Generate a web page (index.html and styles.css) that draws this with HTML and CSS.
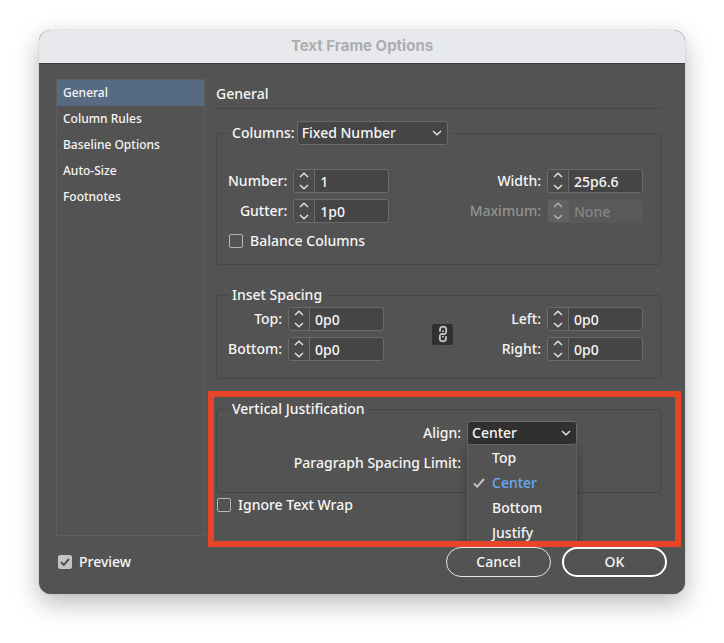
FILE: index.html
```html
<!DOCTYPE html>
<html lang="en">
<head>
    <meta charset="UTF-8">
    <meta name="viewport" content="width=device-width, initial-scale=1.0">
    <title>Text Frame Options</title>
    <link rel="stylesheet" href="styles.css">
</head>
<body>

<!-- Shared icons -->
<svg class="sprite" aria-hidden="true">
    <symbol id="up" viewBox="0 0 10 6"><path d="M1 5 L5 1.3 L9 5"/></symbol>
    <symbol id="down" viewBox="0 0 10 6"><path d="M1 1 L5 4.7 L9 1"/></symbol>
</svg>

<main class="dialog">
    <header class="titlebar">
        <h1>Text Frame Options</h1>
    </header>

    <div class="dialog-body">
        <nav class="sidebar">
            <a href="#general" class="active">General</a>
            <a href="#column-rules">Column Rules</a>
            <a href="#baseline">Baseline Options</a>
            <a href="#auto-size">Auto-Size</a>
            <a href="#footnotes">Footnotes</a>
        </nav>

        <form class="panel" id="options">
            <h2>General</h2>

            <fieldset class="columns">
                <legend>
                    <label for="columns">Columns:</label>
                    <span class="select">
                        <select id="columns"><option>Fixed Number</option><option>Fixed Width</option><option>Flexible Width</option></select>
                        <svg class="chevron"><use href="#down"/></svg>
                    </span>
                </legend>
                <div class="groups">
                    <div class="fields">
                        <label for="number">Number:</label>
                        <div class="stepper">
                            <div class="spin">
                                <button type="button" aria-label="Increase number"><svg><use href="#up"/></svg></button>
                                <button type="button" aria-label="Decrease number"><svg><use href="#down"/></svg></button>
                            </div>
                            <input type="text" id="number" value="1">
                        </div>
                        <label for="gutter">Gutter:</label>
                        <div class="stepper">
                            <div class="spin">
                                <button type="button" aria-label="Increase gutter"><svg><use href="#up"/></svg></button>
                                <button type="button" aria-label="Decrease gutter"><svg><use href="#down"/></svg></button>
                            </div>
                            <input type="text" id="gutter" value="1p0">
                        </div>
                    </div>
                    <div class="fields">
                        <label for="width">Width:</label>
                        <div class="stepper">
                            <div class="spin">
                                <button type="button" aria-label="Increase width"><svg><use href="#up"/></svg></button>
                                <button type="button" aria-label="Decrease width"><svg><use href="#down"/></svg></button>
                            </div>
                            <input type="text" id="width" value="25p6.6">
                        </div>
                        <label for="maximum" class="disabled">Maximum:</label>
                        <div class="stepper disabled">
                            <div class="spin">
                                <button type="button" aria-label="Increase maximum" disabled><svg><use href="#up"/></svg></button>
                                <button type="button" aria-label="Decrease maximum" disabled><svg><use href="#down"/></svg></button>
                            </div>
                            <input type="text" id="maximum" value="None" disabled>
                        </div>
                    </div>
                </div>
                <div class="check">
                    <input type="checkbox" id="balance">
                    <label for="balance">Balance Columns</label>
                </div>
            </fieldset>

            <fieldset class="inset">
                <legend>Inset Spacing</legend>
                <div class="groups">
                    <div class="fields">
                        <label for="top">Top:</label>
                        <div class="stepper">
                            <div class="spin">
                                <button type="button" aria-label="Increase top"><svg><use href="#up"/></svg></button>
                                <button type="button" aria-label="Decrease top"><svg><use href="#down"/></svg></button>
                            </div>
                            <input type="text" id="top" value="0p0">
                        </div>
                        <label for="bottom">Bottom:</label>
                        <div class="stepper">
                            <div class="spin">
                                <button type="button" aria-label="Increase bottom"><svg><use href="#up"/></svg></button>
                                <button type="button" aria-label="Decrease bottom"><svg><use href="#down"/></svg></button>
                            </div>
                            <input type="text" id="bottom" value="0p0">
                        </div>
                    </div>
                    <button type="button" class="link" aria-label="Make all settings the same">
                        <svg viewBox="0 0 10 18">
                            <path d="M2 6.8 L2 4.4 C2 0.6 8.2 0.6 8.2 4.4 L8.2 6.6 C8.2 8.8 6.6 9.4 4.6 9.2"/>
                            <path d="M8 11.2 L8 13.6 C8 17.4 1.8 17.4 1.8 13.6 L1.8 11.4 C1.8 9.2 3.4 8.6 5.4 8.8"/>
                            <path d="M5 5.4 L5 7 M5 11 L5 12.6"/>
                        </svg>
                    </button>
                    <div class="fields">
                        <label for="left">Left:</label>
                        <div class="stepper">
                            <div class="spin">
                                <button type="button" aria-label="Increase left"><svg><use href="#up"/></svg></button>
                                <button type="button" aria-label="Decrease left"><svg><use href="#down"/></svg></button>
                            </div>
                            <input type="text" id="left" value="0p0">
                        </div>
                        <label for="right">Right:</label>
                        <div class="stepper">
                            <div class="spin">
                                <button type="button" aria-label="Increase right"><svg><use href="#up"/></svg></button>
                                <button type="button" aria-label="Decrease right"><svg><use href="#down"/></svg></button>
                            </div>
                            <input type="text" id="right" value="0p0">
                        </div>
                    </div>
                </div>
            </fieldset>

            <div class="highlight">
                <fieldset class="vertical">
                    <legend>Vertical Justification</legend>
                    <div class="fields">
                        <label for="align">Align:</label>
                        <div class="select open">
                            <select id="align"><option>Top</option><option selected>Center</option><option>Bottom</option><option>Justify</option></select>
                            <svg class="chevron"><use href="#down"/></svg>
                            <ul class="menu" role="listbox" aria-label="Align">
                                <li role="option">Top</li>
                                <li role="option" class="selected" aria-selected="true">
                                    <svg viewBox="0 0 12 10"><path d="M1 5.4 L4.2 8.6 L11 1"/></svg>Center
                                </li>
                                <li role="option">Bottom</li>
                                <li role="option">Justify</li>
                            </ul>
                        </div>
                        <span class="label">Paragraph Spacing Limit:</span>
                    </div>
                </fieldset>
                <div class="check">
                    <input type="checkbox" id="ignore">
                    <label for="ignore">Ignore Text Wrap</label>
                </div>
            </div>
        </form>
    </div>

    <footer>
        <div class="check">
            <input type="checkbox" id="preview" form="options" checked>
            <label for="preview">Preview</label>
        </div>
        <div class="buttons">
            <button type="button" class="btn">Cancel</button>
            <button type="submit" form="options" class="btn btn-primary">OK</button>
        </div>
    </footer>
</main>

</body>
</html>
```
FILE: styles.css
```css
* {
    box-sizing: border-box;
}
body {
    margin: 0;
    padding: 30px 39px 49px;
    background-color: #fff;
    color: #f6f6f6;
    font-family: "Noto Sans", "Open Sans", sans-serif;
    font-size: 14px;
    font-weight: 500;
    line-height: 18px;
}
button, input, select {
    font: inherit;
    color: inherit;
}
svg {
    display: block;
    fill: none;
    stroke: #e6e6e6;
    stroke-width: 1.4;
}
.sprite {
    position: absolute;
    width: 0;
    height: 0;
}
.dialog {
    background-color: #535353;
    border-radius: 12px;
    box-shadow: 0 0 1px rgba(0, 0, 0, 0.4), 0 9px 26px rgba(0, 0, 0, 0.28);
}
.titlebar {
    height: 34px;
    border-bottom: 1px solid #3f3f3f;
    border-radius: 12px 12px 0 0;
    background-color: #e8e9ed;
    text-align: center;
}
.titlebar h1 {
    margin: 0;
    color: #adadaf;
    font-family: Inter, sans-serif;
    font-size: 15px;
    font-weight: 700;
    line-height: 32px;
}
.dialog-body {
    display: grid;
    grid-template-columns: 149px 1fr;
    gap: 11px;
    padding: 15px 24px 0 17px;
}
.sidebar {
    margin-bottom: 11px;
    border: 1px solid #5e5e5e;
    font-size: 12px;
}
.sidebar a {
    display: block;
    padding: 0 6px;
    color: inherit;
    line-height: 26px;
    text-decoration: none;
}
.sidebar a.active {
    background-color: #566a82;
}
.panel h2 {
    margin: 0 0 12px;
    border-bottom: 1px solid #484848;
    font-size: 14px;
    font-weight: 500;
    line-height: 29px;
}

/* Groups of settings */
fieldset {
    min-width: 0;
    margin: 0;
    padding: 3px 17px 17px 11px;
    border: 1px solid #464646;
    border-radius: 3px;
}
legend {
    display: flex;
    padding: 0 4px;
}
.columns {
    padding-top: 24px;
    padding-bottom: 11px;
}
.columns legend {
    align-items: center;
    gap: 2px;
}
.columns .select {
    width: 151px;
}
.inset {
    margin: 21px 0 12px;
}
.groups {
    display: flex;
    justify-content: space-between;
    align-items: center;
}
.fields {
    display: grid;
    grid-template-columns: auto 96px;
    grid-auto-rows: 24px;
    gap: 6px;
    align-items: center;
    text-align: right;
}
label.disabled {
    color: #929292;
}
.vertical .fields {
    grid-template-columns: 1fr 176px;
}
.vertical .select {
    width: 110px;
}
.highlight {
    margin: 0 -20px 0 -8px;
    padding: 3px 14px 24px 2px;
    border: 6px solid #e64528;
    overflow: hidden;
}

/* Controls */
.stepper {
    display: flex;
    height: 24px;
    border: 1px solid #6b6b6b;
    border-radius: 3px;
    background-color: #454545;
    overflow: hidden;
}
.spin {
    display: flex;
    flex: none;
    flex-direction: column;
    gap: 2px;
    width: 21px;
    border-right: 1px solid #6b6b6b;
    background-color: #4b4b4b;
}
.spin button {
    display: flex;
    flex: 1;
    align-items: center;
    justify-content: center;
    padding: 0;
    border: 0;
    background: none;
}
.spin svg, .chevron {
    width: 10px;
    height: 6px;
}
.stepper input {
    width: 100%;
    min-width: 0;
    padding: 2px 5px 0;
    border: 0;
    background: none;
}
.stepper.disabled {
    border-color: #595959;
    background-color: #595959;
    color: #858585;
}
.disabled .spin {
    border-color: #616161;
    background-color: #616161;
}
.disabled svg {
    stroke: #b4b4b4;
}
.select {
    position: relative;
    height: 24px;
}
.select select {
    display: block;
    width: 100%;
    height: 24px;
    padding: 0 4px;
    border: 1px solid #6b6b6b;
    border-radius: 3px;
    background-color: #454545;
    appearance: none;
}
.select.open select {
    background-color: #303030;
}
.chevron {
    position: absolute;
    top: 9px;
    right: 6px;
    pointer-events: none;
}
.menu {
    position: absolute;
    top: 24px;
    left: 0;
    width: 100%;
    margin: 0;
    padding: 0 0 6px;
    border: 1px solid #5f5f5f;
    border-top: 0;
    background-color: #535353;
    box-shadow: 0 4px 10px rgba(0, 0, 0, 0.3);
    list-style: none;
    text-align: left;
}
.menu li {
    padding-left: 24px;
    line-height: 25px;
}
.menu .selected {
    display: flex;
    align-items: center;
    gap: 7px;
    padding-left: 5px;
    color: #68a8f0;
}
.menu svg {
    width: 12px;
    height: 10px;
    stroke: #c4c4c4;
    stroke-width: 2;
}
.check {
    display: flex;
    align-items: center;
    gap: 7px;
    height: 24px;
}
.check input {
    width: 14px;
    height: 14px;
    margin: 0 0 0 1px;
    border: 1px solid #b4b4b4;
    border-radius: 2px;
    appearance: none;
}
.check input:checked {
    background: #c4c4c4 url("data:image/svg+xml,%3Csvg xmlns='http://www.w3.org/2000/svg' viewBox='0 0 12 12'%3E%3Cpath d='M2 6.2 L4.8 9 L10 2.8' fill='none' stroke='%23454545' stroke-width='1.8'/%3E%3C/svg%3E");
    border-color: #c4c4c4;
}
.columns .check {
    margin-top: 6px;
}
.link {
    width: 21px;
    height: 21px;
    padding: 0;
    border: 0;
    border-radius: 2px;
    background-color: #303030;
}
.link svg {
    width: 10px;
    height: 18px;
    margin: 0 auto;
    stroke: #c4c4c4;
    stroke-width: 1.8;
}

footer {
    display: flex;
    align-items: center;
    justify-content: space-between;
    padding: 0 18px 17px;
}
.buttons {
    display: flex;
    gap: 11px;
}
.btn {
    width: 105px;
    height: 30px;
    padding: 0;
    border: 1px solid #e6e6e6;
    border-radius: 15px;
    background: none;
}
.btn-primary {
    border: 2px solid #fff;
}
```
